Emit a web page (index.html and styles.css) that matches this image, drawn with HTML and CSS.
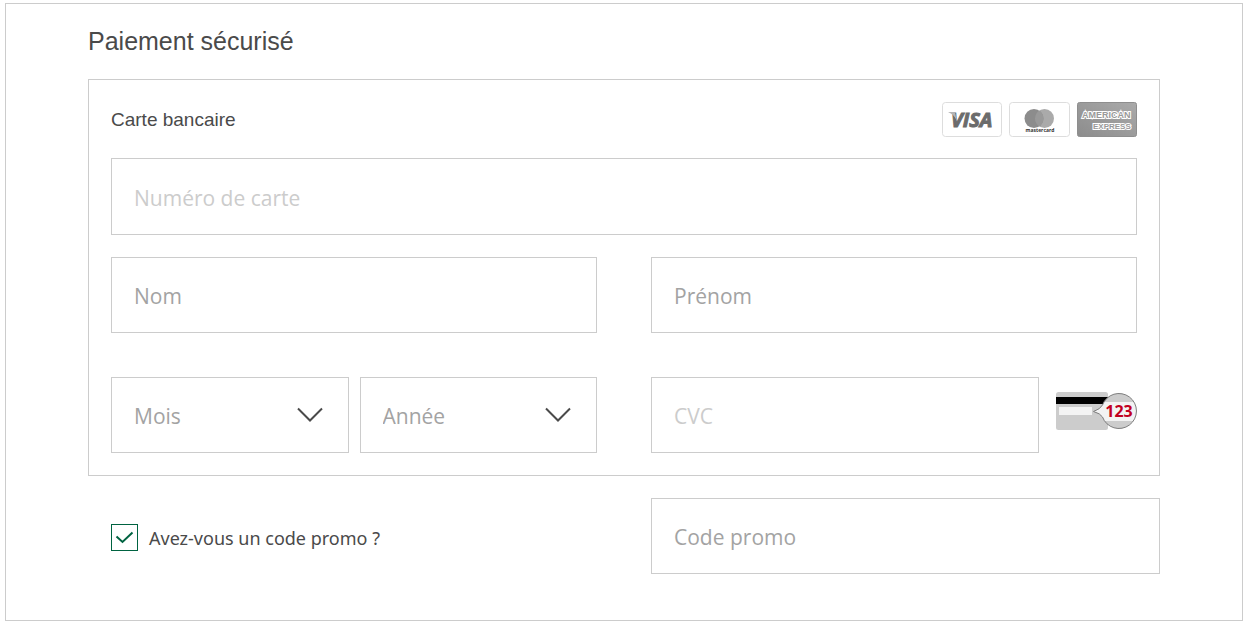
FILE: index.html
```html
<!DOCTYPE html>
<html lang="fr">
<head>
<meta charset="UTF-8">
<meta name="viewport" content="width=device-width, initial-scale=1.0">
<title>Paiement sécurisé</title>
<link rel="stylesheet" href="styles.css">
</head>
<body>
<form class="payment">
  <h1>Paiement sécurisé</h1>

  <section class="panel">
    <div class="panel-header">
      <h2>Carte bancaire</h2>
      <div class="brands">
        <svg width="60" height="35" viewBox="0 0 60 35" role="img" aria-label="Visa">
          <rect x=".5" y=".5" width="59" height="34" rx="3" fill="#fff" stroke="#ddd"/>
          <text class="visa" x="9" y="25">VISA</text>
          <path d="M6 10H11.500Q13 10 13.300 11.500L14.500 18Q12 12.500 6 10Z" fill="#b5b5b5"/>
        </svg>
        <svg width="61" height="35" viewBox="0 0 61 35" role="img" aria-label="Mastercard">
          <rect x=".5" y=".5" width="60" height="34" rx="3" fill="#fff" stroke="#ddd"/>
          <circle cx="35.500" cy="16.500" r="9.500" fill="#aaa"/>
          <circle cx="25" cy="16.500" r="9.500" fill="#8c8c8c"/>
          <path d="M30.250 8.600A9.500 9.500 0 0 1 30.250 24.400A9.500 9.500 0 0 1 30.250 8.600Z" fill="#999"/>
          <text class="mastercard" x="31" y="30">mastercard</text>
        </svg>
        <svg width="60" height="35" viewBox="0 0 60 35" role="img" aria-label="American Express">
          <defs>
            <linearGradient id="amex" x1="0" y1="1" x2="1" y2="0">
              <stop offset="0" stop-color="#8c8c8c"/>
              <stop offset="1" stop-color="#aaa"/>
            </linearGradient>
          </defs>
          <rect x=".5" y=".5" width="59" height="34" rx="2" fill="url(#amex)" stroke="#8e8e8e"/>
          <text class="amex" x="5" y="16">AMERICAN</text>
          <text class="amex" x="16" y="27">EXPRESS</text>
        </svg>
      </div>
    </div>

    <input class="field card-number" type="text" placeholder="Numéro de carte" aria-label="Numéro de carte" inputmode="numeric">

    <div class="columns names">
      <input class="field dark" type="text" placeholder="Nom" aria-label="Nom">
      <input class="field dark" type="text" placeholder="Prénom" aria-label="Prénom">
    </div>

    <div class="columns">
      <div class="expiry">
        <div class="select">
          <select class="field" aria-label="Mois">
            <option>Mois</option>
          </select>
          <svg class="chevron" width="26" height="16" viewBox="0 0 26 16"><path d="M1 1.500L13 13.500L25 1.500"/></svg>
        </div>
        <div class="select">
          <select class="field" aria-label="Année">
            <option>Année</option>
          </select>
          <svg class="chevron" width="26" height="16" viewBox="0 0 26 16"><path d="M1 1.500L13 13.500L25 1.500"/></svg>
        </div>
      </div>
      <div class="security">
        <input class="field" type="text" placeholder="CVC" aria-label="CVC" inputmode="numeric">
        <svg class="cvc-card" width="81" height="38" viewBox="0 0 81 38" role="img" aria-label="Code au dos de la carte">
          <defs>
            <clipPath id="bubble"><circle cx="63" cy="19" r="17.500"/></clipPath>
          </defs>
          <rect y="0" width="52" height="38" rx="2.500" fill="#ccc"/>
          <rect y="5" width="52" height="7" fill="#000"/>
          <rect x="3" y="15" width="33" height="8" fill="#f3f3f3"/>
          <path d="M46.500 13Q44.500 17 37.500 19.500Q44.500 21.500 46.500 25A17.500 17.500 0 1 0 46.500 13Z" fill="#ccc"/>
          <rect x="44" y="10" width="38" height="19" fill="#f3f3f3" clip-path="url(#bubble)"/>
          <path d="M49 12.500L46.500 13Q44.500 17 37.500 19.500Q44.500 21.500 46.500 25L49 26Z" fill="#f3f3f3"/>
          <path d="M46.500 13Q44.500 17 37.500 19.500Q44.500 21.500 46.500 25A17.500 17.500 0 1 0 46.500 13Z" fill="none" stroke="#7d7d7d"/>
          <text class="digits" x="63" y="25">123</text>
        </svg>
      </div>
    </div>
  </section>

  <div class="columns promo">
    <label class="promo-toggle">
      <input type="checkbox" checked>
      <span>Avez-vous un code promo ?</span>
    </label>
    <input class="field dark" type="text" placeholder="Code promo" aria-label="Code promo">
  </div>
</form>
</body>
</html>
```

FILE: styles.css
```css
* {
  box-sizing: border-box;
}
body {
  margin: 3px 2px 6px 5px;
  background: #fff;
  color: #4a4a4a;
  font-family: "Liberation Sans", Arial, sans-serif;
}
.payment {
  padding: 22px 82px 46px;
  border: 1px solid #ccc;
}
h1 {
  margin: 0 0 23px;
  font-size: 25px;
  line-height: 30px;
  font-weight: normal;
}
h2 {
  margin: 0;
  font-size: 19px;
  font-weight: normal;
}

.panel {
  padding: 22px;
  border: 1px solid #ccc;
}
.panel-header {
  display: flex;
  align-items: center;
  justify-content: space-between;
  margin-bottom: 21px;
}
.brands {
  display: flex;
  gap: 7px;
}

/* Fields */
.field {
  display: block;
  width: 100%;
  min-width: 0;
  height: 76px;
  margin: 0;
  padding: 2px 22px 0;
  border: 1px solid #ccc;
  border-radius: 0;
  background: #fff;
  color: #a3a3a3;
  font-family: "Open Sans", "Noto Sans", sans-serif;
  font-size: 21px;
}
.field::placeholder {
  color: #ccc;
  opacity: 1;
}
.field.dark::placeholder {
  color: #a3a3a3;
}
.card-number {
  height: 77px;
}
.columns {
  display: grid;
  grid-template-columns: 1fr 1fr;
  gap: 54px;
}
.names {
  margin: 22px 0 44px;
}
.expiry {
  display: grid;
  grid-template-columns: 1fr 1fr;
  gap: 11px;
}
.select {
  position: relative;
}
.select .field {
  appearance: none;
}
.chevron {
  position: absolute;
  right: 26px;
  top: 30px;
  pointer-events: none;
}
.chevron path {
  fill: none;
  stroke: #4a4a4a;
  stroke-width: 2;
}
.security {
  display: flex;
  gap: 17px;
}
.cvc-card {
  flex: none;
  margin-top: 15px;
}

/* Promo code */
.promo {
  margin-top: 22px;
}
.promo-toggle {
  display: flex;
  align-items: center;
  gap: 11px;
  padding: 3px 0 0 23px;
  font-family: "Noto Sans", "Open Sans", sans-serif;
  font-size: 18px;
}
.promo-toggle input {
  appearance: none;
  flex: none;
  width: 27px;
  height: 27px;
  margin: 0;
  border: 1px solid #006341;
}
.promo-toggle input:checked {
  background: url("data:image/svg+xml,%3Csvg xmlns='http://www.w3.org/2000/svg' width='25' height='25'%3E%3Cpath d='M4.500 11.500L10.500 17L20.500 7.500' fill='none' stroke='%23006341' stroke-width='2'/%3E%3C/svg%3E") center no-repeat;
}

/* Lettering inside the card logos */
.visa {
  fill: #6b6b6b;
  stroke: #6b6b6b;
  stroke-width: 1;
  font: italic bold 20px "Open Sans", sans-serif;
}
.mastercard {
  fill: #333;
  font: bold 5px "Open Sans", sans-serif;
  text-anchor: middle;
}
.amex {
  fill: #999;
  stroke: #fff;
  stroke-width: 2;
  paint-order: stroke;
  font: bold 9px "Liberation Sans", sans-serif;
}
.amex + .amex {
  font-size: 8px;
}
.digits {
  fill: #c1001f;
  font: bold 16px "Open Sans", sans-serif;
  text-anchor: middle;
}
```
